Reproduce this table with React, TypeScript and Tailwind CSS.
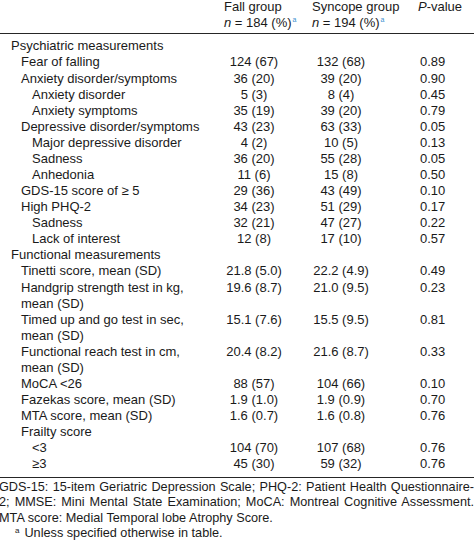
import React from "react";

type Row = {
  label: React.ReactNode;
  indent: 0 | 1 | 2;
  fall?: string;
  syncope?: string;
  p?: string;
};

const rows: Row[] = [
  { label: "Psychiatric measurements", indent: 0 },
  { label: "Fear of falling", indent: 1, fall: "124 (67)", syncope: "132 (68)", p: "0.89" },
  { label: "Anxiety disorder/symptoms", indent: 1, fall: "36 (20)", syncope: "39 (20)", p: "0.90" },
  { label: "Anxiety disorder", indent: 2, fall: "5 (3)", syncope: "8 (4)", p: "0.45" },
  { label: "Anxiety symptoms", indent: 2, fall: "35 (19)", syncope: "39 (20)", p: "0.79" },
  { label: "Depressive disorder/symptoms", indent: 1, fall: "43 (23)", syncope: "63 (33)", p: "0.05" },
  { label: "Major depressive disorder", indent: 2, fall: "4 (2)", syncope: "10 (5)", p: "0.13" },
  { label: "Sadness", indent: 2, fall: "36 (20)", syncope: "55 (28)", p: "0.05" },
  { label: "Anhedonia", indent: 2, fall: "11 (6)", syncope: "15 (8)", p: "0.50" },
  { label: "GDS-15 score of \u2265 5", indent: 1, fall: "29 (36)", syncope: "43 (49)", p: "0.10" },
  { label: "High PHQ-2", indent: 1, fall: "34 (23)", syncope: "51 (29)", p: "0.17" },
  { label: "Sadness", indent: 2, fall: "32 (21)", syncope: "47 (27)", p: "0.22" },
  { label: "Lack of interest", indent: 2, fall: "12 (8)", syncope: "17 (10)", p: "0.57" },
  { label: "Functional measurements", indent: 0 },
  { label: "Tinetti score, mean (SD)", indent: 1, fall: "21.8 (5.0)", syncope: "22.2 (4.9)", p: "0.49" },
  { label: "Handgrip strength test in kg,", indent: 1, fall: "19.6 (8.7)", syncope: "21.0 (9.5)", p: "0.23" },
  { label: "mean (SD)", indent: 1 },
  { label: "Timed up and go test in sec,", indent: 1, fall: "15.1 (7.6)", syncope: "15.5 (9.5)", p: "0.81" },
  { label: "mean (SD)", indent: 1 },
  { label: "Functional reach test in cm,", indent: 1, fall: "20.4 (8.2)", syncope: "21.6 (8.7)", p: "0.33" },
  { label: "mean (SD)", indent: 1 },
  { label: "MoCA <26", indent: 1, fall: "88 (57)", syncope: "104 (66)", p: "0.10" },
  { label: "Fazekas score, mean (SD)", indent: 1, fall: "1.9 (1.0)", syncope: "1.9 (0.9)", p: "0.70" },
  { label: "MTA score, mean (SD)", indent: 1, fall: "1.6 (0.7)", syncope: "1.6 (0.8)", p: "0.76" },
  { label: "Frailty score", indent: 1 },
  { label: "<3", indent: 2, fall: "104 (70)", syncope: "107 (68)", p: "0.76" },
  { label: "\u22653", indent: 2, fall: "45 (30)", syncope: "59 (32)", p: "0.76" },
];

const indentClass = ["pl-[11px]", "pl-[21px]", "pl-[32px]"];

const Sup = () => (
  <span className="relative -top-[5px] ml-[1px] text-[7px] leading-none text-[#3b8fd0]">a</span>
);

export default function App() {
  return (
    <div
      className="w-[474px] h-[547px] overflow-hidden bg-white text-[#1a1a1a] text-[13px]"
      style={{ fontFamily: '"Liberation Sans", Arial, sans-serif' }}
    >
      {/* Header */}
      <div className="grid grid-cols-[224px_88px_106px_1fr] mb-[4px] leading-[13px]">
        <div />
        <div className="flex flex-col gap-[3px]">
          <div>Fall group</div>
          <div className="whitespace-nowrap">
            <i>n</i> = 184 (%)
            <Sup />
          </div>
        </div>
        <div className="flex flex-col gap-[3px]">
          <div>Syncope group</div>
          <div className="whitespace-nowrap">
            <i>n</i> = 194 (%)
            <Sup />
          </div>
        </div>
        <div>
          <i>P</i>-value
        </div>
      </div>
      <div className="h-[1.4px] bg-[#262626]" />

      {/* Body */}
      <div className="pt-[4px] pb-[4.2px] leading-[16.09px]">
        {rows.map((r, i) => (
          <div key={i} className="grid grid-cols-[224px_88px_106px_1fr] h-[16.09px]">
            <div className={`${indentClass[r.indent]} whitespace-nowrap`}>{r.label}</div>
            <div className="w-[60px] text-center whitespace-nowrap">{r.fall}</div>
            <div className="w-[58px] text-center whitespace-nowrap">{r.syncope}</div>
            <div className="pl-[2px]">{r.p}</div>
          </div>
        ))}
      </div>
      <div className="h-[1.4px] bg-[#262626]" />

      {/* Footnotes */}
      <div className="pt-[2px] text-[12.7px] leading-[15.3px] whitespace-nowrap">
        <div className="-ml-[1px] w-[475px] [text-align-last:justify]">
          GDS-15: 15-item Geriatric Depression Scale; PHQ-2: Patient Health Questionnaire-
        </div>
        <div className="-ml-[1px] w-[475px] [text-align-last:justify]">
          2; MMSE: Mini Mental State Examination; MoCA: Montreal Cognitive Assessment.
        </div>
        <div className="-ml-[1px]">MTA score: Medial Temporal lobe Atrophy Score.</div>
        <div className="pl-[15px]">
          <span className="relative -top-[4px] text-[8px] leading-none">a</span>
          <span className="ml-[5px]">Unless specified otherwise in table.</span>
        </div>
      </div>
    </div>
  );
}
